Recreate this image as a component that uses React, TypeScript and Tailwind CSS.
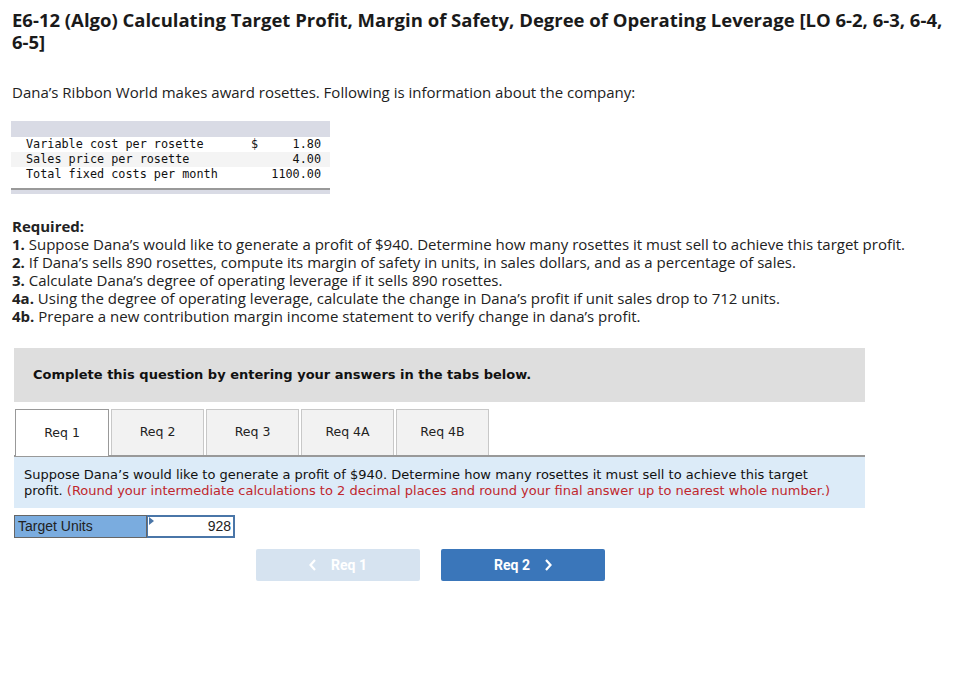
import React from "react";

const body = { fontFamily: '"Open Sans", "Noto Sans", sans-serif' };
const verd = { fontFamily: '"DejaVu Sans", Verdana, sans-serif' };
const mono = { fontFamily: '"DejaVu Sans Mono", "Liberation Mono", monospace' };
const arial = { fontFamily: '"Liberation Sans", Arial, sans-serif' };

export default function App() {
  const tabs = ["Req 1", "Req 2", "Req 3", "Req 4A", "Req 4B"];
  return (
    <div className="w-[975px] h-[683px] bg-white text-[#222] pl-[12px] pt-[9px]">
      <h1 className="w-[945px] text-[18.5px] font-bold leading-[22px] text-[#1a1a1a]" style={body}>
        E6-12 (Algo) Calculating Target Profit, Margin of Safety, Degree of Operating Leverage [LO 6-2, 6-3, 6-4, 6-5]
      </h1>
      <p className="mt-[29px] text-[15px] leading-[20px]" style={body}>
        Dana’s Ribbon World makes award rosettes. Following is information about the company:
      </p>

      <div className="mt-[19px] w-[319px] -ml-[1px]" style={mono}>
        <div className="h-[16px] bg-[#d9dbe5]" />
        <div className="text-[11.8px] leading-[15px] text-[#111]">
          <div className="flex bg-white pl-[15px] pr-[9px]">
            <span className="flex-1">Variable cost per rosette</span>
            <span className="w-[20px]">$</span>
            <span className="w-[50px] text-right">1.80</span>
          </div>
          <div className="flex bg-[#f4f4f4] pl-[15px] pr-[9px]">
            <span className="flex-1">Sales price per rosette</span>
            <span className="w-[70px] text-right">4.00</span>
          </div>
          <div className="flex bg-white pl-[15px] pr-[9px]">
            <span className="flex-1">Total fixed costs per month</span>
            <span className="w-[70px] text-right">1100.00</span>
          </div>
        </div>
        <div className="mt-[6px] h-[6px] bg-[#d9dbe5] border-t-2 border-[#999]" />
      </div>

      <div className="mt-[23px] text-[15px] leading-[18px]" style={body}>
        <div className="font-bold">Required:</div>
        <div><b>1.</b> Suppose Dana’s would like to generate a profit of $940. Determine how many rosettes it must sell to achieve this target profit.</div>
        <div><b>2.</b> If Dana’s sells 890 rosettes, compute its margin of safety in units, in sales dollars, and as a percentage of sales.</div>
        <div><b>3.</b> Calculate Dana’s degree of operating leverage if it sells 890 rosettes.</div>
        <div><b>4a.</b> Using the degree of operating leverage, calculate the change in Dana’s profit if unit sales drop to 712 units.</div>
        <div><b>4b.</b> Prepare a new contribution margin income statement to verify change in dana’s profit.</div>
      </div>

      <div className="mt-[23px] ml-[2px] w-[851px]">
        <div className="h-[54px] bg-[#dedede] flex items-center pl-[19px]">
          <span className="text-[13px] font-bold text-[#111]" style={verd}>
            Complete this question by entering your answers in the tabs below.
          </span>
        </div>

        <div className="mt-[7px] flex gap-[2px] pl-[1px] border-b-2 border-[#999]">
          {tabs.map((t, i) => (
            <div
              key={t}
              className={
                i === 0
                  ? "w-[94px] h-[47px] -mb-[2px] bg-white border border-b-0 border-[#999] flex items-center justify-center text-[12.5px]"
                  : "w-[93px] h-[46px] bg-[#f2f2f2] border border-b-0 border-[#c8c8c8] flex items-center justify-center text-[12.5px]"
              }
              style={verd}
            >
              {t}
            </div>
          ))}
        </div>

        <div className="bg-[#dcebf8] pl-[10px] pr-[20px] pt-[10px] pb-[9px] text-[13px] leading-[16px] text-[#111]" style={verd}>
          Suppose Dana’s would like to generate a profit of $940. Determine how many rosettes it must sell to achieve this target profit.{" "}
          <span className="text-[#c0272d]">(Round your intermediate calculations to 2 decimal places and round your final answer up to nearest whole number.)</span>
        </div>

        <div className="mt-[7px] flex h-[23px]" style={arial}>
          <div className="w-[133px] bg-[#7aacdf] border border-[#666] flex items-center pl-[3px] text-[14px] text-[#222]">
            Target Units
          </div>
          <div className="relative w-[88px] bg-white border-2 border-l border-[#4a76a8] flex items-center justify-end pr-[2px] text-[14px] text-[#222]">
            <span className="absolute left-[1px] top-0 w-0 h-0 border-t-[4px] border-b-[4px] border-l-[5px] border-t-transparent border-b-transparent border-l-[#4a76a8]" />
            928
          </div>
        </div>

        <div className="mt-[11px] flex gap-[21px] pl-[242px]" style={{ fontFamily: 'Roboto, "Liberation Sans", sans-serif' }}>
          <div className="w-[164px] h-[32px] rounded-[2px] bg-[#d6e3f0] flex items-center justify-center gap-[14px] text-white font-bold text-[14px]">
            <svg width="8" height="12" viewBox="0 0 8 12"><path d="M6 1 L1.5 6 L6 11" stroke="white" strokeWidth="2.2" fill="none" /></svg>
            <span>Req 1</span>
          </div>
          <div className="w-[164px] h-[32px] rounded-[2px] bg-[#3a76ba] flex items-center justify-center gap-[14px] text-white font-bold text-[14px]">
            <span>Req 2</span>
            <svg width="8" height="12" viewBox="0 0 8 12"><path d="M2 1 L6.5 6 L2 11" stroke="white" strokeWidth="2.2" fill="none" /></svg>
          </div>
        </div>
      </div>
    </div>
  );
}
